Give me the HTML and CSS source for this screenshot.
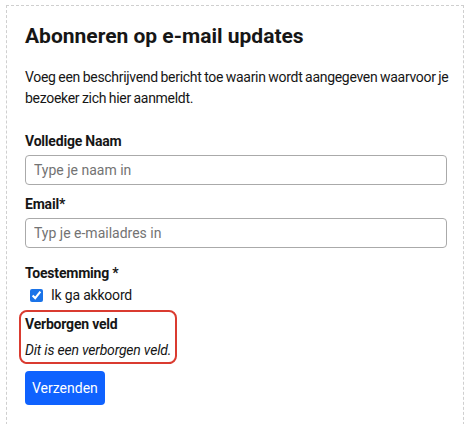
FILE: index.html
```html
<!DOCTYPE html>
<html lang="nl">
<head>
<meta charset="utf-8">
<link rel="stylesheet" href="styles.css">
</head>
<body>
<div class="card">
  <h2 class="title">Abonneren op e-mail updates</h2>
  <p class="intro">Voeg een beschrijvend bericht toe waarin wordt aangegeven waarvoor je<br>bezoeker zich hier aanmeldt.</p>
  <div class="field">
    <label class="label">Volledige Naam</label>
    <input class="input" type="text" placeholder="Type je naam in">
  </div>
  <div class="field">
    <label class="label">Email*</label>
    <input class="input" type="text" placeholder="Typ je e-mailadres in">
  </div>
  <div class="field field-consent">
    <span class="label">Toestemming *</span>
    <label class="check"><input type="checkbox" checked> Ik ga akkoord</label>
  </div>
  <div class="hidden-field">
    <div class="label">Verborgen veld</div>
    <div class="hidden-text">Dit is een verborgen veld.</div>
  </div>
  <button class="btn" type="button">Verzenden</button>
</div>
</body>
</html>
```
FILE: styles.css
```css
html, body { margin: 0; padding: 0; background: #fff; }
body {
  font-family: Roboto, "Liberation Sans", Arial, sans-serif;
  color: #161616;
  font-size: 14px;
  letter-spacing: -0.2px;
}
.card {
  margin: 5px 0 0 6px;
  width: 458px;
  box-sizing: border-box;
  border: 1px dashed #cfcfcf;
  border-bottom: none;
  padding: 15px 16px 30px 18px;
  min-height: 430px;
}
.title {
  margin: 0 0 16px 0;
  font-size: 21px;
  line-height: 30px;
  font-weight: 700;
  letter-spacing: 0;
}
.intro {
  margin: 0 -20px 21px 0;
  line-height: 21px;
  letter-spacing: -0.3px;
  word-spacing: -0.5px;
}
.field { margin-bottom: 8px; }
.label {
  display: block;
  font-weight: 700;
  line-height: 22px;
  margin-bottom: 3px;
}
.input {
  display: block;
  width: 100%;
  box-sizing: border-box;
  height: 30px;
  border: 1px solid #aaa;
  border-radius: 4px;
  padding: 0 8px;
  font: inherit;
}
.input::placeholder { color: #737373; }
.field-consent { margin-top: 14px; margin-bottom: 4px; }
.field-consent .label { margin-bottom: 0; }
.check {
  display: flex;
  align-items: center;
  gap: 8px;
  margin-left: 5px;
  line-height: 22px;
}
.check input { margin: 0; width: 13px; height: 13px; accent-color: #1a73e8; }
.hidden-field {
  width: fit-content;
  margin: 0 0 7px -6px;
  padding: 1px 4px 0 4px;
  border: 2px solid #da3b30;
  border-radius: 8px;
}
.hidden-text { font-style: italic; line-height: 24px; }
.btn {
  display: block;
  height: 34px;
  padding: 0 7px;
  border: none;
  border-radius: 4px;
  background: #0f62fe;
  color: #fff;
  font: inherit;
}
```
